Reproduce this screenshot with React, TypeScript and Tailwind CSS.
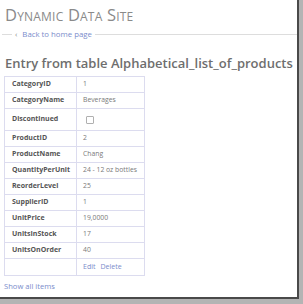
const rows: { label: string; value: string }[] = [
  { label: 'CategoryID', value: '1' },
  { label: 'CategoryName', value: 'Beverages' },
  { label: 'Discontinued', value: '' },
  { label: 'ProductID', value: '2' },
  { label: 'ProductName', value: 'Chang' },
  { label: 'QuantityPerUnit', value: '24 - 12 oz bottles' },
  { label: 'ReorderLevel', value: '25' },
  { label: 'SupplierID', value: '1' },
  { label: 'UnitPrice', value: '19,0000' },
  { label: 'UnitsInStock', value: '17' },
  { label: 'UnitsOnOrder', value: '40' },
];

export default function App() {
  return (
    <div className="w-[303px] h-[304px] bg-[#b4b4b4] overflow-hidden font-['Open_Sans',sans-serif]">
      <div className="w-[299px] h-[299px] border-r-2 border-b-2 border-[#4a4a4a] bg-white">
        {/* Header */}
        <div className="pl-[5px] pt-[5px] text-[16.5px] leading-[20px] text-[#8a8a8a] [font-variant:small-caps] tracking-[0.2px]">
          Dynamic Data Site
        </div>
        <div className="flex items-center mt-[4px] h-[10px]">
          <div className="w-[10px] ml-[2px] border-t border-[#dddddd]" />
          <div className="flex items-center gap-[5px] px-[3px] text-[7.8px] leading-[10px] text-[#7a8ccb]">
            <span className="text-[#8a8a8a]">‹</span>
            <span>Back to home page</span>
          </div>
          <div className="flex-1 border-t border-[#dddddd]" />
        </div>

        {/* Entry title */}
        <div className="pl-[5px] mt-[15px] text-[13px] leading-[18px] font-semibold text-[#6e6e6e]">
          Entry from table Alphabetical_list_of_products
        </div>

        {/* Details table */}
        <table className="ml-[4px] mt-[4px] w-[140px] table-fixed border-collapse">
          <colgroup>
            <col className="w-[72px]" />
            <col className="w-[68px]" />
          </colgroup>
          <tbody>
            {rows.map(r => (
              <tr key={r.label} className={r.label === 'Discontinued' ? 'h-[22px]' : 'h-[16px]'}>
                <td className="border border-[#dcdcef] pl-[7px] whitespace-nowrap text-[7px] font-bold text-[#555555]">
                  {r.label}
                </td>
                <td className="border border-[#dcdcef] pl-[6px] whitespace-nowrap text-[6.8px] text-[#7a7a7a]">
                  {r.label === 'Discontinued' ? (
                    <span className="inline-block ml-[3px] w-[8px] h-[8px] rounded-[1px] border border-[#b0b0b0] bg-white align-middle" />
                  ) : (
                    r.value
                  )}
                </td>
              </tr>
            ))}
            <tr className="h-[17px]">
              <td className="border border-[#dcdcef]" />
              <td className="border border-[#dcdcef] pl-[6px] text-[7px] text-[#7a8ccb]">
                <span>Edit</span>
                <span className="ml-[5px]">Delete</span>
              </td>
            </tr>
          </tbody>
        </table>

        <div className="pl-[4px] mt-[5px] text-[7.6px] leading-[10px] text-[#7a8ccb]">Show all items</div>
      </div>
    </div>
  );
}
